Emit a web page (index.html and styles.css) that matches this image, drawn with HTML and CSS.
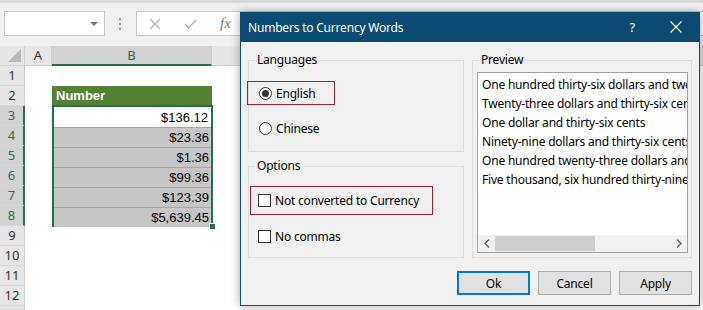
FILE: index.html
```html
<!DOCTYPE html>
<html lang="en">
<head>
    <meta charset="UTF-8">
    <title>Numbers to Currency Words</title>
    <link rel="stylesheet" href="styles.css">
</head>
<body>
    <div class="toolbar">
        <div class="namebox"><span class="caret"></span></div>
        <div class="grip">
            <svg width="3" height="12" viewBox="0 0 3 12"><rect x="0" y="0" width="2" height="2" fill="#a0a0a0"/><rect x="0" y="5" width="2" height="2" fill="#a0a0a0"/><rect x="0" y="10" width="2" height="2" fill="#a0a0a0"/></svg>
        </div>
        <div class="formula">
            <svg class="fb-icon" width="12" height="12" viewBox="0 0 12 12"><path d="M1 1L11 11M11 1L1 11" stroke="#b4b4b4" stroke-width="1.3" fill="none"/></svg>
            <svg class="fb-icon" width="13" height="10" viewBox="0 0 13 10"><path d="M1 5L4.5 9L12 1" stroke="#b4b4b4" stroke-width="1.4" fill="none"/></svg>
            <span class="fx">fx</span>
        </div>
    </div>

    <div class="sheet">
        <div class="corner">
            <svg width="13" height="13" viewBox="0 0 13 13"><polygon points="13,0 13,13 0,13" fill="#b8b8b8"/></svg>
        </div>
        <div class="colhead">A</div>
        <div class="colhead active">B</div>
        <div class="colhead">C</div>
        <div class="colhead"></div>

        <div class="rowheads">
            <div class="rowhead">1</div>
            <div class="rowhead">2</div>
            <div class="rowhead sel">3</div>
            <div class="rowhead sel">4</div>
            <div class="rowhead sel">5</div>
            <div class="rowhead sel">6</div>
            <div class="rowhead sel">7</div>
            <div class="rowhead sel">8</div>
            <div class="rowhead">9</div>
            <div class="rowhead">10</div>
            <div class="rowhead">11</div>
            <div class="rowhead">12</div>
            <div class="rowhead partial"></div>
        </div>

        <div class="number-head">Number</div>
        <div class="selection">
            <div class="cell current">$136.12</div>
            <div class="cell">$23.36</div>
            <div class="cell">$1.36</div>
            <div class="cell">$99.36</div>
            <div class="cell">$123.39</div>
            <div class="cell">$5,639.45</div>
            <span class="fill-handle"></span>
        </div>
    </div>

    <div class="dialog">
        <div class="titlebar">
            <span class="title">Numbers to Currency Words</span>
            <span class="help">?</span>
            <span class="close">
                <svg width="12" height="12" viewBox="0 0 12 12"><path d="M0.5 0.5L11.5 11.5M11.5 0.5L0.5 11.5" stroke="#fff" stroke-width="1.2" fill="none"/></svg>
            </span>
        </div>
        <div class="dlg-body">
            <div class="cols">
                <div class="left-col">
                    <div class="group languages">
                        <div class="group-title">Languages</div>
                        <label class="opt mark first"><span class="radio on"></span>English</label>
                        <label class="opt second"><span class="radio"></span>Chinese</label>
                    </div>
                    <div class="group options">
                        <div class="group-title">Options</div>
                        <label class="opt mark wide"><span class="check"></span>Not converted to Currency</label>
                        <label class="opt commas"><span class="check"></span>No commas</label>
                    </div>
                </div>
                <div class="group preview">
                    <div class="group-title">Preview</div>
                    <div class="preview-box">
                        <div class="lines">
                            <div>One hundred thirty-six dollars and twelve cents</div>
                            <div>Twenty-three dollars and thirty-six cents</div>
                            <div>One dollar and thirty-six cents</div>
                            <div>Ninety-nine dollars and thirty-six cents</div>
                            <div>One hundred twenty-three dollars and thirty-nine cents</div>
                            <div>Five thousand, six hundred thirty-nine dollars and forty-five cents</div>
                        </div>
                        <div class="hscroll">
                            <span class="arrow"><svg width="6" height="9" viewBox="0 0 6 9"><path d="M5 0.5L1 4.5L5 8.5" stroke="#606060" stroke-width="1.4" fill="none"/></svg></span>
                            <div class="track"><span class="thumb"></span></div>
                            <span class="arrow"><svg width="6" height="9" viewBox="0 0 6 9"><path d="M1 0.5L5 4.5L1 8.5" stroke="#606060" stroke-width="1.4" fill="none"/></svg></span>
                        </div>
                    </div>
                </div>
            </div>
            <div class="buttons">
                <button class="btn default">Ok</button>
                <button class="btn">Cancel</button>
                <button class="btn">Apply</button>
            </div>
        </div>
    </div>
</body>
</html>
```

FILE: styles.css
```css
:root {
    --excel-green: #217346;
    --head-bg: #e6e6e6;
    --head-line: #c6c6c6;
    --dlg-bg: #f0f0f0;
    --dlg-blue: #0b4a72;
    --mark-red: #a11d2f;
}

body {
    margin: 0;
    width: 703px;
    height: 310px;
    overflow: hidden;
    position: relative;
    background: #fff;
    font-family: 'Noto Sans', sans-serif;
}

/* excel formula bar */

.toolbar {
    height: 46px;
    box-sizing: border-box;
    border-top: 3px solid #d9d9d9;
    background: #f1f1f1;
    display: flex;
    align-items: flex-start;
    padding: 8px 0 0 4px;
}

.namebox {
    width: 101px;
    height: 25px;
    box-sizing: border-box;
    border: 1px solid var(--head-line);
    background: #fff;
    display: flex;
    align-items: center;
    justify-content: flex-end;
    padding-right: 6px;
}

.caret {
    width: 0;
    height: 0;
    border-left: 4px solid transparent;
    border-right: 4px solid transparent;
    border-top: 4px solid #777;
}

.grip {
    width: 31px;
    height: 25px;
    display: flex;
    align-items: center;
    justify-content: center;
}

.formula {
    flex: 1;
    height: 25px;
    box-sizing: border-box;
    border: 1px solid var(--head-line);
    border-right: none;
    background: #fff;
    display: flex;
    align-items: center;
    padding-left: 12px;
    gap: 23px;
}

.fx {
    font-family: 'Liberation Serif', serif;
    font-style: italic;
    font-size: 15px;
    color: #777;
    margin-left: 0;
}

/* sheet grid */

.sheet {
    display: grid;
    grid-template-columns: 25px 27px 160px 64px 1fr;
    grid-template-rows: 20px repeat(12, 20px) 4px;
}

.corner,
.colhead {
    background: var(--head-bg);
    border-right: 1px solid #cfcfcf;
    border-bottom: 1px solid #cfcfcf;
    box-sizing: border-box;
}

.corner {
    display: flex;
    align-items: flex-end;
    justify-content: flex-end;
    padding: 0 3px 3px 0;
}

.colhead {
    font-size: 13px;
    color: #333;
    text-align: center;
    line-height: 19px;
}

.colhead.active {
    background: #d2d2d2;
    color: var(--excel-green);
    border-bottom: 2px solid var(--excel-green);
}

.rowheads {
    grid-column: 1;
    grid-row: 2 / span 13;
    display: flex;
    flex-direction: column;
}

.rowhead {
    height: 20px;
    flex-shrink: 0;
    box-sizing: border-box;
    background: var(--head-bg);
    border-right: 1px solid #cfcfcf;
    border-bottom: 1px solid #d6d6d6;
    font-size: 13px;
    color: #333;
    text-align: center;
    line-height: 19px;
}

.rowhead.partial {
    height: 4px;
    border-bottom: none;
}

.rowhead.sel {
    background: #d2d2d2;
    color: var(--excel-green);
    border-right: 2px solid var(--excel-green);
}

.number-head {
    grid-column: 3;
    grid-row: 3;
    background: #548235;
    color: #fff;
    font-family: 'Liberation Sans', sans-serif;
    font-weight: bold;
    font-size: 13px;
    line-height: 20px;
    padding-left: 4px;
}

.selection {
    grid-column: 3;
    grid-row: 4 / span 6;
    margin: -1px -1px -1px 0;
    position: relative;
    border: 2px solid var(--excel-green);
    box-shadow: inset 0 0 0 1px #fff;
    display: flex;
    flex-direction: column;
}

.cell {
    flex: 1;
    background: #c6c6c6;
    border-top: 1px solid #a6a6a6;
    font-family: 'Liberation Sans', sans-serif;
    font-size: 13px;
    line-height: 19px;
    text-align: right;
    padding-right: 2px;
    color: #000;
}

.cell.current {
    background: #fff;
    border-top: none;
    margin: 1px 1px 0 1px;
}

.fill-handle {
    position: absolute;
    right: -5px;
    bottom: -5px;
    width: 5px;
    height: 5px;
    background: var(--excel-green);
    border: 1px solid #fff;
}

/* dialog window */

.dialog {
    position: absolute;
    left: 240px;
    top: 12px;
    width: 460px;
    height: 294px;
    box-sizing: border-box;
    border: 1px solid var(--dlg-blue);
    border-top: none;
    background: var(--dlg-bg);
    box-shadow: 0 0 9px rgba(0, 0, 0, 0.35);
    font-size: 12px;
    letter-spacing: -0.2px;
    color: #000;
}

.titlebar {
    height: 30px;
    background: var(--dlg-blue);
    color: #fff;
    display: flex;
    align-items: center;
    padding-left: 8px;
    margin: 0 -1px;
}

.title {
    flex: 1;
    font-size: 12px;
}

.help {
    font-size: 13px;
    margin-right: 35px;
}

.close {
    display: flex;
    margin-right: 18px;
}

.dlg-body {
    padding: 18px 7px 0 7px;
}

.cols {
    display: flex;
    gap: 8px;
}

.left-col {
    width: 216px;
    display: flex;
    flex-direction: column;
    gap: 14px;
}

.group {
    border: 1px solid #dcdcdc;
    box-sizing: border-box;
}

.group-title {
    width: fit-content;
    margin: -9px 0 0 6px;
    padding: 0 2px;
    background: var(--dlg-bg);
    line-height: 16px;
}

.languages,
.options {
    height: 92px;
}

.opt {
    display: flex;
    align-items: center;
    gap: 4px;
    height: 24px;
    box-sizing: border-box;
    padding-left: 10px;
}

.opt.mark {
    border: 1px solid var(--mark-red);
}

.languages .first {
    width: 88px;
    margin: 13px 0 0 -2px;
    padding-left: 11px;
}

.languages .second {
    margin-top: 11px;
}

.options .wide {
    width: 183px;
    height: 29px;
    margin: 12px 0 0 1px;
    padding-left: 7px;
}

.options .commas {
    margin-top: 9px;
    padding-left: 9px;
}

.radio {
    width: 13px;
    height: 13px;
    box-sizing: border-box;
    border: 1px solid #333;
    border-radius: 50%;
    background: #fff;
    display: flex;
    align-items: center;
    justify-content: center;
}

.radio.on::after {
    content: '';
    width: 7px;
    height: 7px;
    border-radius: 50%;
    background: #333;
}

.check {
    width: 13px;
    height: 13px;
    box-sizing: border-box;
    border: 1px solid #333;
    background: #fff;
}

.preview {
    width: 220px;
    height: 198px;
}

.preview-box {
    margin: 4px 0 0 4px;
    width: 211px;
    height: 181px;
    box-sizing: border-box;
    border: 1px solid #a0a0a0;
    background: #fff;
    display: flex;
    flex-direction: column;
    overflow: hidden;
}

.lines {
    padding: 2px 0 0 4px;
    line-height: 19px;
    white-space: nowrap;
}

.hscroll {
    margin-top: auto;
    height: 17px;
    display: flex;
    background: var(--dlg-bg);
}

.arrow {
    width: 17px;
    display: flex;
    align-items: center;
    justify-content: center;
}

.track {
    flex: 1;
    padding: 1px 0;
    display: flex;
}

.thumb {
    width: 100px;
    background: #cdcdcd;
}

.buttons {
    margin-top: 13px;
    display: flex;
    justify-content: flex-end;
    gap: 8px;
}

.btn {
    width: 73px;
    height: 24px;
    box-sizing: border-box;
    border: 1px solid #adadad;
    background: #e1e1e1;
    font-family: inherit;
    font-size: 12px;
    letter-spacing: inherit;
    color: #000;
    padding: 0;
}

.btn.default {
    border: 2px solid #0078d7;
}
```
